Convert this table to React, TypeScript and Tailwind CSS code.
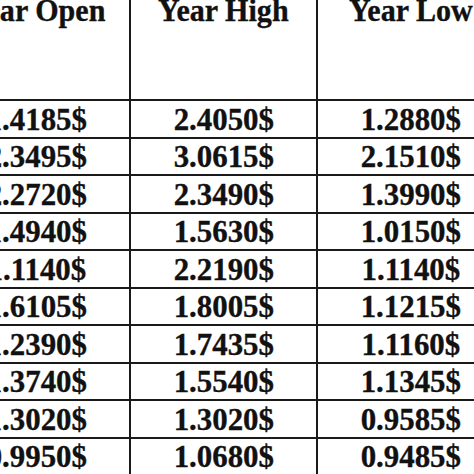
import React from "react";

const rows: [string, string, string][] = [
  ["1.4185$", "2.4050$", "1.2880$"],
  ["2.3495$", "3.0615$", "2.1510$"],
  ["2.2720$", "2.3490$", "1.3990$"],
  ["1.4940$", "1.5630$", "1.0150$"],
  ["1.1140$", "2.2190$", "1.1140$"],
  ["1.6105$", "1.8005$", "1.1215$"],
  ["1.2390$", "1.7435$", "1.1160$"],
  ["1.3740$", "1.5540$", "1.1345$"],
  ["1.3020$", "1.3020$", "0.9585$"],
  ["0.9950$", "1.0680$", "0.9485$"],
];

const headers = ["Year Open", "Year High", "Year Low"];

export default function App() {
  return (
    <div
      className="w-[474px] h-[474px] overflow-hidden bg-white text-[#111] [-webkit-text-stroke:0.35px_#111]"
      style={{ fontFamily: '"Liberation Serif", "Times New Roman", serif' }}
    >
      <div className="ml-[-56px] w-[600px] flex flex-col font-bold">
        <div className="flex h-[101px] border-b-2 border-[#1a1a1a]">
          {headers.map((h) => (
            <div
              key={h}
              className="w-[187px] shrink-0 border-r-2 border-[#1a1a1a] flex justify-center"
            >
              <span className="text-[31px] leading-[31px] mt-[-5px] scale-x-[0.97] whitespace-nowrap">{h}</span>
            </div>
          ))}
        </div>
        {rows.map((r, i) => (
          <div key={i} className="flex h-[37.5px] border-b-2 border-[#1a1a1a]">
            {r.map((v, j) => (
              <div
                key={j}
                className="w-[187px] shrink-0 border-r-2 border-[#1a1a1a] flex items-center justify-center"
              >
                <span className="text-[32.5px] leading-none scale-x-[0.95]">{v}</span>
              </div>
            ))}
          </div>
        ))}
      </div>
    </div>
  );
}
